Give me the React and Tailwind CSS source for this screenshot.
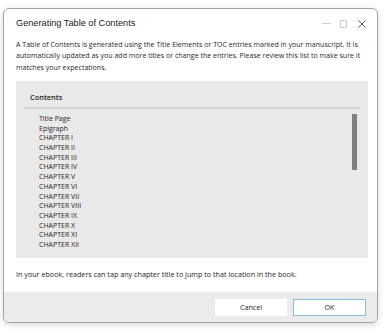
const chapters = [
  'Title Page',
  'Epigraph',
  'CHAPTER I',
  'CHAPTER II',
  'CHAPTER III',
  'CHAPTER IV',
  'CHAPTER V',
  'CHAPTER VI',
  'CHAPTER VII',
  'CHAPTER VIII',
  'CHAPTER IX',
  'CHAPTER X',
  'CHAPTER XI',
  'CHAPTER XII',
];

export default function App() {
  return (
    <div className="w-[387px] h-[333px] bg-white pl-[3px] pt-[8px] overflow-hidden">
      <div className="w-[375px] h-[315px] border border-[#a3a3a3] rounded-[6px] bg-white shadow-[0_2px_6px_rgba(0,0,0,0.15)] flex flex-col overflow-hidden">
        {/* title bar */}
        <div className="h-[27px] flex items-center justify-between pl-[12px] pr-[11px] pt-[2px]">
          <span className="text-[9.2px] text-[#1a1a1a]" style={{ fontFamily: '"Liberation Sans", Arial, sans-serif' }}>
            Generating Table of Contents
          </span>
          <div className="flex items-center gap-[9px]">
            <div className="w-[9px] h-px bg-[#d0d0d0]" />
            <div className="w-[7px] h-[8px] border border-[#d0d0d0]" />
            <svg width="8" height="8" viewBox="0 0 8 8" className="ml-[2px]">
              <path d="M0.5 0.5 L7.5 7.5 M7.5 0.5 L0.5 7.5" stroke="#555" strokeWidth="1" fill="none" />
            </svg>
          </div>
        </div>

        <div className="flex-1 flex flex-col px-[12px] pr-[9px]" style={{ fontFamily: '"Open Sans", "Noto Sans", sans-serif' }}>
          <p className="text-[7.05px] leading-[11.3px] text-[#1f1f1f] mt-[3px] whitespace-nowrap">
            A Table of Contents is generated using the Title Elements or TOC entries marked in your manuscript. It is
            <br />
            automatically updated as you add more titles or change the entries. Please review this list to make sure it
            <br />
            matches your expectations.
          </p>

          <div className="mt-[8px] h-[177px] bg-[#e9e9e9] flex flex-col px-[8px]">
            <div className="pt-[11px] pl-[6px] h-[26px] text-[7.4px] font-semibold text-[#1f1f1f]">Contents</div>
            <div className="h-[2px] bg-[#d6d6d6]" />
            <div className="flex-1 relative">
              <ul className="pt-[5px] pl-[15px] text-[7px] leading-[9.7px] text-[#262626]">
                {chapters.map((c) => (
                  <li key={c}>{c}</li>
                ))}
              </ul>
              <div className="absolute right-[3px] top-[5px] w-[5px] h-[56px] bg-[#7f7f7f]" />
            </div>
          </div>

          <p className="mt-[11px] text-[7.2px] text-[#1f1f1f]">
            In your ebook, readers can tap any chapter title to jump to that location in the book.
          </p>
        </div>

        <div className="h-[30px] bg-[#ebebeb] flex items-center justify-end gap-[6px] pr-[11px]" style={{ fontFamily: '"Open Sans", "Noto Sans", sans-serif' }}>
          <button className="w-[72px] h-[17px] bg-white text-[7.2px] text-[#2a2a2a]">Cancel</button>
          <button className="w-[73px] h-[17px] bg-white border border-[#8dbad6] text-[7.2px] text-[#2a2a2a]">OK</button>
        </div>
      </div>
    </div>
  );
}
